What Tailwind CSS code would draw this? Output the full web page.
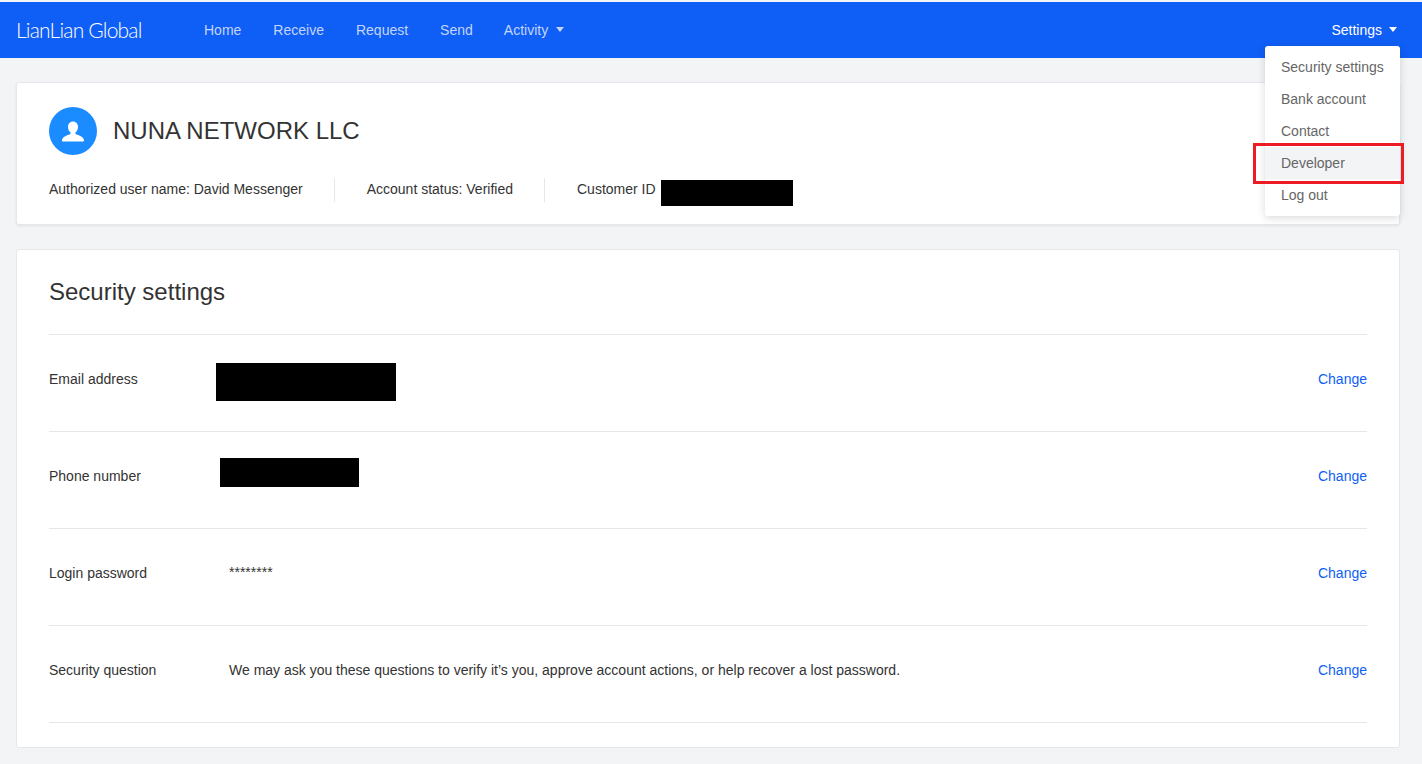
<!DOCTYPE html>
<html>
  <head>
    <meta charset="utf-8" />
    <title>Security settings</title>
    <script src="https://cdn.jsdelivr.net/npm/@tailwindcss/browser@4"></script>
  </head>
  <body class="bg-[#f3f4f6] h-[764px] overflow-hidden pt-[2px] text-sm text-[#333] font-['Liberation_Sans',Arial,sans-serif]">
    <!-- top bar -->
    <nav class="relative h-14 bg-[#0f5ef5] flex items-center px-4">
      <div class="w-[188px] -mt-[2px] text-[21px] leading-none font-light tracking-[-0.8px] text-white font-['Lato',sans-serif]">LianLian Global</div>
      <div class="flex items-center gap-8 text-[#c3d5fc]">
        <a>Home</a>
        <a>Receive</a>
        <a>Request</a>
        <a>Send</a>
        <a class="flex items-center -ml-px">Activity
          <svg class="ml-2 mt-[-1px]" width="8" height="5" viewBox="0 0 8 5"><path d="M0 0h8L4 5z" fill="#c3d5fc" /></svg>
        </a>
      </div>
      <a class="ml-auto mr-[9px] flex items-center text-white">Settings
        <svg class="ml-[7px] mt-[-1px]" width="8" height="5" viewBox="0 0 8 5"><path d="M0 0h8L4 5z" fill="#fff" /></svg>
      </a>

      <!-- settings dropdown -->
      <div class="absolute right-[22px] top-[44px] z-10 w-[135px] py-[5px] bg-white rounded-[3px] shadow-[0_2px_8px_rgba(0,0,0,0.15)] text-[#666]">
        <div class="h-8 leading-8 pl-4">Security settings</div>
        <div class="h-8 leading-8 pl-4">Bank account</div>
        <div class="h-8 leading-8 pl-4">Contact</div>
        <div class="relative h-8 leading-8 pl-4 bg-[#f3f4f6]">Developer
          <div class="absolute left-[-12px] top-[-4px] w-[151px] h-[41px] border-[3px] border-[#ed1c24]"></div>
        </div>
        <div class="h-8 leading-8 pl-4">Log out</div>
      </div>
    </nav>

    <main class="pl-4 pr-[22px] pt-6">
      <!-- account card -->
      <section class="h-[143px] bg-white border border-[#e5e7eb] rounded-[3px] shadow-[0_1px_3px_rgba(0,0,0,0.08)] px-8 pt-6">
        <div class="flex items-center">
          <div class="w-12 h-12 rounded-full bg-[#1a8cff] flex items-center justify-center">
            <svg class="mt-[2px]" width="24" height="24" viewBox="0 0 24 24"><path d="M12 1.500c-3 0-5 2.300-5 5.400 0 2.200.9 4 2.200 5.200.5.500.5 1.300.1 1.800C8.200 15.100 1 15.500 1 20.500c0 .6.400 1 1 1h20c.6 0 1-.4 1-1 0-5-7.200-5.400-8.300-6.600-.4-.5-.4-1.300.1-1.800C16.100 10.900 17 9.100 17 6.900c0-3.100-2-5.400-5-5.400z" fill="#fff" /></svg>
          </div>
          <h1 class="ml-4 text-2xl text-[#333]">NUNA NETWORK LLC</h1>
        </div>
        <div class="mt-[23px] flex items-start h-6">
          <span class="h-6 pr-[31px] border-r border-[#e5e7eb] leading-[22px]">Authorized user name: David Messenger</span>
          <span class="h-6 pl-8 pr-[31px] border-r border-[#e5e7eb] leading-[22px]">Account status: Verified</span>
          <span class="h-6 pl-8 leading-[22px]">Customer ID</span>
          <span class="ml-[5px] mt-[2px] w-[132px] h-[26px] bg-black"></span>
        </div>
      </section>

      <!-- security settings card -->
      <section class="mt-6 h-[499px] bg-white border border-[#e5e7eb] rounded-[3px] px-8">
        <h2 class="h-[85px] pt-[27px] text-2xl leading-[30px] border-b border-[#e5e7eb]">Security settings</h2>

        <div class="h-[97px] flex items-start border-b border-[#e5e7eb]">
          <span class="w-[167px] pt-[33px] leading-[22px]">Email address</span>
          <span class="mt-[28px] w-[180px] h-[38px] bg-black"></span>
          <a class="ml-auto pt-[33px] leading-[22px] text-[#0f5ef5]">Change</a>
        </div>
        <div class="h-[97px] flex items-start border-b border-[#e5e7eb]">
          <span class="w-[171px] pt-[33px] leading-[22px]">Phone number</span>
          <span class="mt-[26px] w-[139px] h-[29px] bg-black"></span>
          <a class="ml-auto pt-[33px] leading-[22px] text-[#0f5ef5]">Change</a>
        </div>
        <div class="h-[97px] flex items-start border-b border-[#e5e7eb]">
          <span class="w-[180px] pt-[33px] leading-[22px]">Login password</span>
          <span class="pt-[32px] leading-[22px]">********</span>
          <a class="ml-auto pt-[33px] leading-[22px] text-[#0f5ef5]">Change</a>
        </div>
        <div class="h-[97px] flex items-start border-b border-[#e5e7eb]">
          <span class="w-[180px] pt-[33px] leading-[22px]">Security question</span>
          <span class="pt-[33px] leading-[22px]">We may ask you these questions to verify it’s you, approve account actions, or help recover a lost password.</span>
          <a class="ml-auto pt-[33px] leading-[22px] text-[#0f5ef5]">Change</a>
        </div>
      </section>
    </main>
  </body>
</html>
